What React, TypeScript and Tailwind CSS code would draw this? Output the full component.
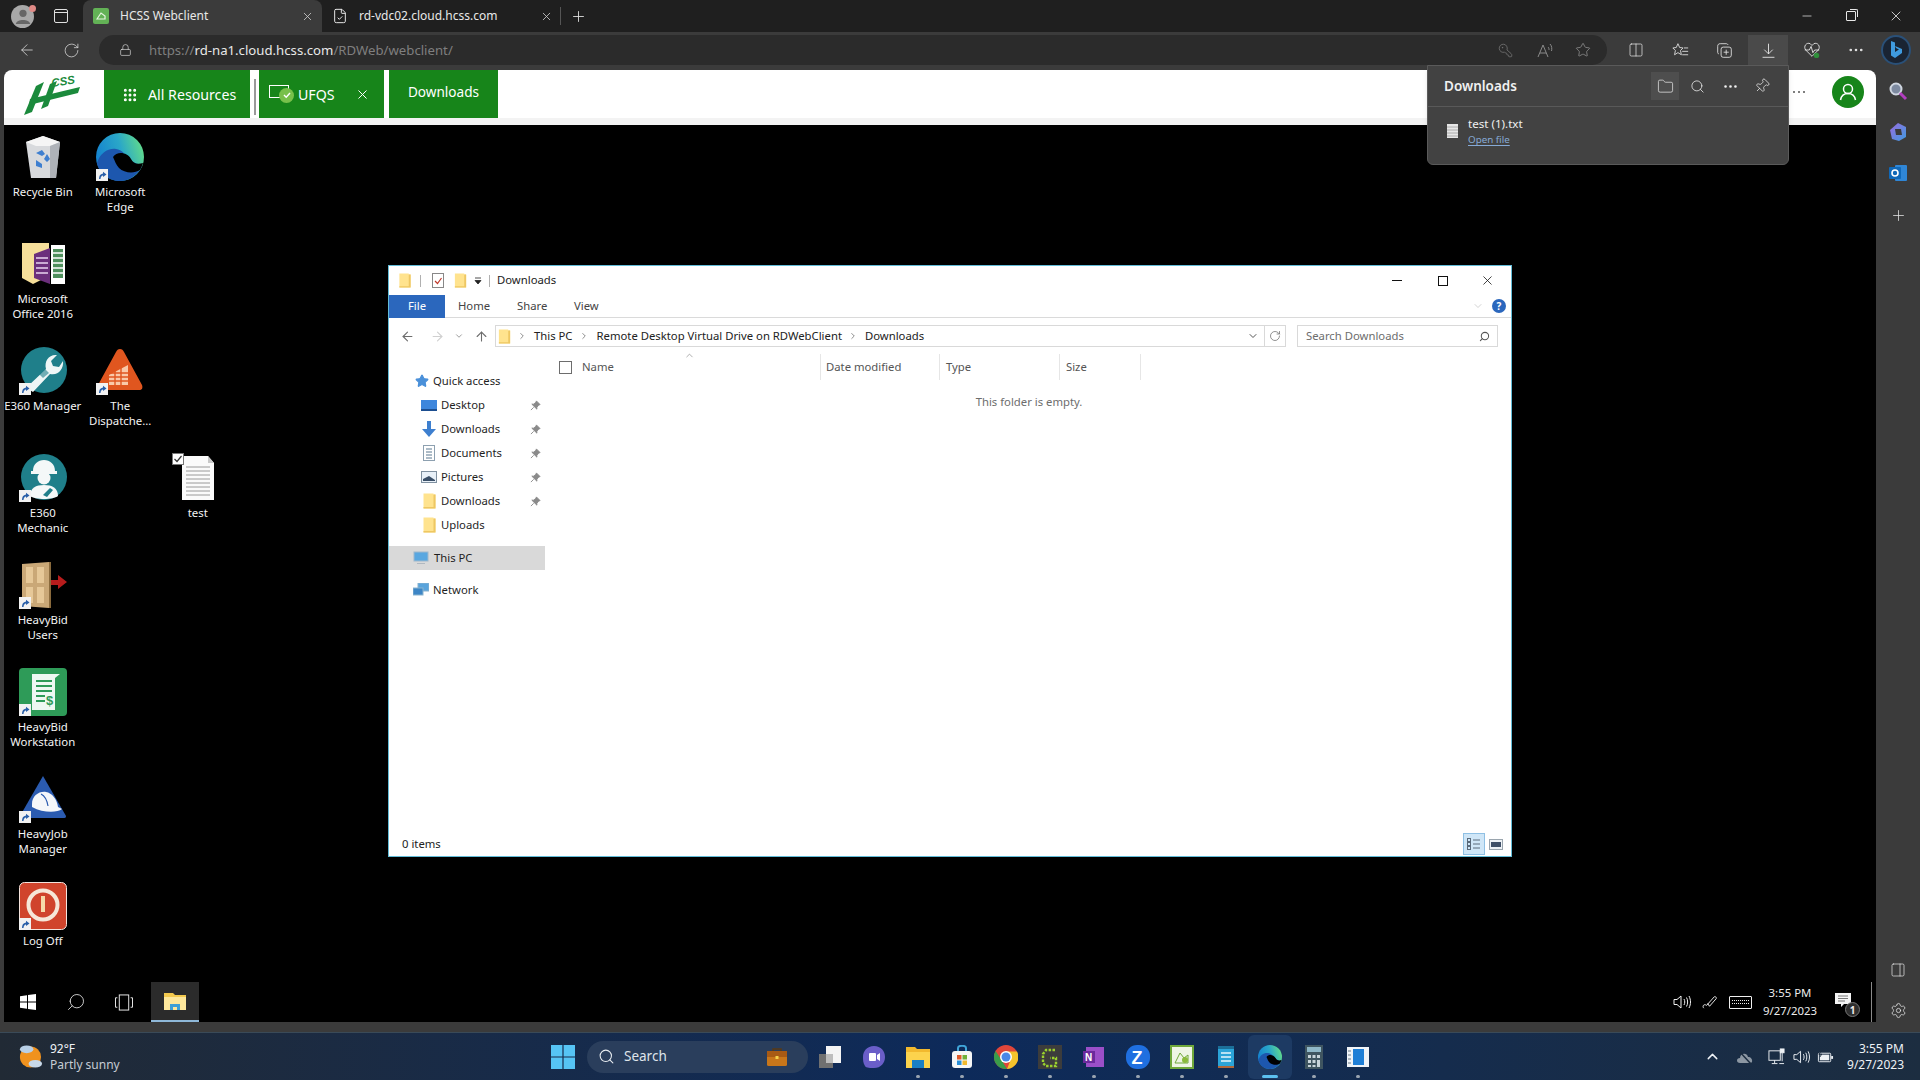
import { ReactNode } from "react";
import {
  ArrowLeft,
  ArrowRight,
  ArrowUp,
  ChevronDown,
  ChevronRight,
  ChevronUp,
  Columns2,
  Ellipsis,
  FileCheck,
  Folder,
  Grip,
  KeyRound,
  Lock,
  Minus,
  PanelRight,
  Pin,
  Plus,
  RotateCw,
  Search,
  Settings,
  Star,
  X,
} from "lucide-react";

// ---------- shared little drawings ----------

const Shortcut = () => (
  <svg viewBox="0 0 12 12" className="absolute bottom-0 left-0 h-3 w-3">
    <rect width="12" height="12" fill="#f2f2f2" />
    <path d="M3 10 C3 7 4 5 7 4.5 V2.8 L10.5 5.6 L7 8 V6.4 C5.5 6.6 4.5 8 4.5 10 Z" fill="#2a5fa8" />
  </svg>
);

const EdgeLogo = ({ className }: { className: string }) => (
  <svg viewBox="0 0 48 48" className={className}>
    <defs>
      <linearGradient id="edgeTop" x1="0" y1="0.6" x2="1" y2="0.3">
        <stop offset="0" stopColor="#1380d0" />
        <stop offset="0.55" stopColor="#2aa7c8" />
        <stop offset="1" stopColor="#62dc8a" />
      </linearGradient>
    </defs>
    <circle cx="24" cy="24" r="24" fill="url(#edgeTop)" />
    <path d="M1 30 C4 20 12 15 20 16 C26 17 30 21 30 26 L46 33 C42 42 33 48 24 48 C12 48 3 40 1 30 Z" fill="#1d57ae" />
    <path d="M17 24 C21 18 31 19 35 26 C37 30 41 32 47 30 C46 33 45 35 44 37 C38 41 28 40 23 35 C20 32 19 28 17 24 Z" fill="#000" />
    <path d="M30 24 C33 24 36 27 36 30 C32 30 29 28 30 24 Z" fill="#000" />
  </svg>
);

const MiniFolder = ({ className = "h-4 w-3" }: { className?: string }) => (
  <svg viewBox="0 0 12 16" className={className}>
    <path d="M0 0.5 H10 V1.5 H12 V15.5 H0 Z" fill="#ffe38e" />
    <path d="M10 1.5 H12 V15.5 H0 V14 H10 Z" fill="#eec763" />
  </svg>
);

const ExplorerIcon = ({ className }: { className: string }) => (
  <svg viewBox="0 0 24 24" className={className}>
    <path d="M1 4 H10 L12 6 H23 V21 H1 Z" fill="#f3c94e" />
    <path d="M1 8 H23 V21 H1 Z" fill="#fde79b" />
    <path d="M7 21 V15 H17 V21 H14 V18 H10 V21 Z" fill="#3d9fd6" />
  </svg>
);

// ---------- desktop icons ----------

const RecycleBin = () => (
  <svg viewBox="0 0 48 48" className="h-12 w-12">
    <path d="M7 9 L24 3 L41 9 L37 45 H12 Z" fill="#d8dadd" />
    <path d="M7 9 L24 3 L41 9 L31 13 H17 Z" fill="#f5f5f5" />
    <path d="M31 13 L41 9 L37 45 H31 Z" fill="#aeb2b8" />
    <path d="M17 20 l6 -3 3 4 -3 2 Z M28 21 l3 5 -3 3 -3 -3 Z M17 27 l6 4 v4 l-6 -2 Z" fill="#3e7fd0" />
  </svg>
);

const OfficeFolder = () => (
  <svg viewBox="0 0 48 48" className="h-12 w-12">
    <path d="M3 3 H30 V36 L14 44 L3 38 Z" fill="#f6df9a" />
    <path d="M32 5 H46 V44 H32 Z" fill="#fff" />
    <path d="M34 9 H44 V38 H34 Z" fill="#4e8f5c" />
    <path d="M34 13 H44 M34 18 H44 M34 23 H44 M34 28 H44 M34 33 H44" stroke="#fff" strokeWidth="1.6" />
    <path d="M15 14 L31 8 V44 L15 38 Z" fill="#6b2f7c" />
    <path d="M17 18 H29 M17 23 H29 M17 28 H29 M17 33 H29" stroke="#e9d5f0" strokeWidth="1.6" />
  </svg>
);

const E360Manager = () => (
  <svg viewBox="0 0 48 48" className="h-12 w-12">
    <circle cx="25" cy="23" r="23" fill="#1f7f8a" />
    <path d="M8 40 L27 22 C25 14 30 7 38 8 L32 14 L34 19 L40 20 L44 14 C45 22 39 29 31 27 L14 45 C12 44 9 42 8 40 Z" fill="#eef6f6" />
    <path d="M20 27 l6 -5 4 4 -6 5 Z" fill="#1f7f8a" opacity="0.6" />
  </svg>
);

const Dispatcher = () => (
  <svg viewBox="0 0 48 48" className="h-12 w-12">
    <path d="M24 2 C26 2 27 3 28 5 L46 38 C47 41 46 43 43 43 H5 C2 43 1 41 2 38 L20 5 C21 3 22 2 24 2 Z" fill="#e0561f" />
    <path d="M13 28 L32 18 V38 H13 Z" fill="#f9c9a8" />
    <path d="M19 24 V38 M25 21 V38 M13 30 H32 M13 34 H32 M13 26 H32" stroke="#e0561f" strokeWidth="1.4" />
  </svg>
);

const E360Mechanic = () => (
  <svg viewBox="0 0 48 48" className="h-12 w-12">
    <circle cx="25" cy="23" r="23" fill="#1f7f8a" />
    <path d="M14 17 C14 10 19 6 25 6 C31 6 36 10 36 17 H38 V20 H12 V17 Z" fill="#f4f8f8" />
    <circle cx="25" cy="24" r="6.5" fill="#f4f8f8" />
    <path d="M11 42 C11 34 17 31 25 31 C33 31 39 34 39 42 C34 46 16 46 11 42 Z" fill="#f4f8f8" />
    <path d="M24 41 L31 34 L34 36 L28 43 Z" fill="#1f7f8a" />
  </svg>
);

const HeavyBidUsers = () => (
  <svg viewBox="0 0 48 48" className="h-12 w-12">
    <path d="M3 3 L30 1 V47 L3 45 Z" fill="#caa877" />
    <path d="M7 6 H14 V22 H7 Z M18 6 H25 V22 H18 Z M7 26 H14 V42 H7 Z M18 26 H25 V42 H18 Z" fill="#e6c898" />
    <path d="M30 1 H32 V47 H30 Z" fill="#8a6a3c" />
    <path d="M32 19 H39 V14 L48 21 L39 28 V24 H32 Z" fill="#b71c1c" />
  </svg>
);

const HeavyBidWorkstation = () => (
  <svg viewBox="0 0 48 48" className="h-12 w-12">
    <rect width="48" height="48" rx="4" fill="#2e9b58" />
    <path d="M13 6 H41 L36 10 V42 H13 Z" fill="#eef8f2" />
    <path d="M17 13 H33 M17 18 H33 M17 23 H33 M17 28 H26 M17 33 H26" stroke="#2e9b58" strokeWidth="1.8" />
    <text x="27" y="37" fontSize="13" fontWeight="700" fill="#2e9b58" fontFamily="Liberation Sans, sans-serif">$</text>
  </svg>
);

const HeavyJob = () => (
  <svg viewBox="0 0 48 48" className="h-12 w-12">
    <path d="M24 1 L47 41 C47 43 46 43 44 43 H4 C2 43 1 43 1 41 Z" fill="#2b5bb0" />
    <path d="M13 29 C13 21 20 16 27 17 C33 18 38 24 39 32 L43 34 C38 38 24 38 13 32 Z" fill="#f5f7fa" />
    <path d="M22 19 C26 21 28 25 29 31" stroke="#2b5bb0" strokeWidth="1.2" fill="none" />
  </svg>
);

const LogOff = () => (
  <svg viewBox="0 0 48 48" className="h-12 w-12">
    <rect x="0.5" y="0.5" width="47" height="47" rx="5" fill="#d0442c" stroke="#f3e3dd" />
    <circle cx="24" cy="23" r="14.5" fill="none" stroke="#f6e7d8" strokeWidth="4" />
    <rect x="22" y="14" width="4" height="16" fill="#f6d9a8" />
  </svg>
);

const TextFile = () => (
  <div className="relative h-12 w-12">
    <svg viewBox="0 0 48 48" className="h-12 w-12">
      <path d="M8 2 H34 L40 9 V46 H8 Z" fill="#fafafa" />
      <path d="M34 2 L40 9 H34 Z" fill="#c8c8c8" />
      <path d="M12 13 H36 M12 17 H36 M12 21 H36 M12 25 H36 M12 29 H36 M12 33 H36 M12 37 H36 M12 41 H36" stroke="#8e8e8e" strokeWidth="0.9" />
    </svg>
    <div className="absolute -left-[2px] top-[-1px] flex h-3 w-3 items-center justify-center border border-[#777] bg-white">
      <svg viewBox="0 0 10 10" className="h-[10px] w-[10px]">
        <path d="M1.5 5 L4 7.5 L8.5 2" fill="none" stroke="#333" strokeWidth="1.2" />
      </svg>
    </div>
  </div>
);

const desktopIcons: { label: string[]; place: string; art: ReactNode; shortcut?: boolean }[] = [
  { label: ["Recycle Bin"], place: "col-start-1 row-start-1", art: <RecycleBin /> },
  { label: ["Microsoft", "Edge"], place: "col-start-2 row-start-1", art: <EdgeLogo className="h-12 w-12" />, shortcut: true },
  { label: ["Microsoft", "Office 2016"], place: "col-start-1 row-start-2", art: <OfficeFolder /> },
  { label: ["E360 Manager"], place: "col-start-1 row-start-3", art: <E360Manager />, shortcut: true },
  { label: ["The", "Dispatche..."], place: "col-start-2 row-start-3", art: <Dispatcher />, shortcut: true },
  { label: ["E360", "Mechanic"], place: "col-start-1 row-start-4", art: <E360Mechanic />, shortcut: true },
  { label: ["test"], place: "col-start-3 row-start-4", art: <TextFile /> },
  { label: ["HeavyBid", "Users"], place: "col-start-1 row-start-5", art: <HeavyBidUsers />, shortcut: true },
  { label: ["HeavyBid", "Workstation"], place: "col-start-1 row-start-6", art: <HeavyBidWorkstation />, shortcut: true },
  { label: ["HeavyJob", "Manager"], place: "col-start-1 row-start-7", art: <HeavyJob />, shortcut: true },
  { label: ["Log Off"], place: "col-start-1 row-start-8", art: <LogOff />, shortcut: true },
];

// ---------- browser chrome ----------

const TabBar = () => (
  <div className="flex h-8 items-center bg-[#1f1f1f] text-[12px] text-[#e8e8e8]">
    <div className="relative ml-[11px] flex h-[23px] w-[23px] items-center justify-center rounded-full bg-[#a8a8a8]">
      <svg viewBox="0 0 20 20" className="h-[18px] w-[18px]">
        <circle cx="10" cy="7" r="4" fill="#666" />
        <path d="M2 19 C3 13 17 13 18 19 Z" fill="#666" />
      </svg>
      <div className="absolute -right-[2px] top-0 h-[7px] w-[7px] rounded-full bg-[#e08a86]" />
    </div>
    <div className="ml-[20px] flex h-[14px] w-[14px] flex-col rounded-[2px] border border-[#e0e0e0]">
      <div className="h-[3px] border-b border-[#e0e0e0]" />
    </div>
    <div className="ml-[15px] flex h-8 w-[239px] items-center rounded-t-lg bg-[#3b3b3b] pl-[10px]">
      <div className="flex h-4 w-4 items-center justify-center rounded-[2px] bg-[#63b256]">
        <svg viewBox="0 0 12 12" className="h-3 w-3">
          <path d="M2 9 L6 3 L10 6 L10 9 Z" fill="none" stroke="#e6f5e0" strokeWidth="1.2" />
        </svg>
      </div>
      <span className="ml-[11px] w-[181px]">HCSS Webclient</span>
      <X className="h-[13px] w-[13px] text-[#cfcfcf]" strokeWidth={1.5} />
    </div>
    <div className="flex h-8 w-[238px] items-center pl-[10px]">
      <FileCheck className="h-4 w-4 text-[#e6e6e6]" strokeWidth={1.5} />
      <span className="ml-[11px] w-[181px]">rd-vdc02.cloud.hcss.com</span>
      <X className="h-[13px] w-[13px] text-[#cfcfcf]" strokeWidth={1.5} />
    </div>
    <div className="h-[18px] w-px bg-[#555]" />
    <Plus className="ml-[9px] h-[17px] w-[17px] text-[#e0e0e0]" strokeWidth={1.25} />
    <div className="flex-1" />
    <Minus className="h-[14px] w-[14px]" strokeWidth={1.25} />
    <div className="ml-[32px]">
      <div className="relative h-[10px] w-[10px] rounded-[1px] border border-[#e8e8e8]">
        <div className="absolute -right-[3px] -top-[3px] h-[8px] w-[8px] rounded-tr-[2px] border-r border-t border-[#e8e8e8]" />
      </div>
    </div>
    <X className="ml-[32px] mr-[16px] h-[16px] w-[16px]" strokeWidth={1.25} />
  </div>
);

const ToolIcon = ({ children, className = "" }: { children: ReactNode; className?: string }) => (
  <div className={`flex h-[30px] w-[40px] shrink-0 items-center justify-center ${className}`}>{children}</div>
);

const Toolbar = () => (
  <div className="flex h-9 items-center bg-[#3b3b3b] text-[#e6e6e6]">
    <ArrowLeft className="ml-[18px] h-[18px] w-[18px]" strokeWidth={1} />
    <RotateCw className="ml-[27px] h-[17px] w-[17px]" strokeWidth={1} />
    <div className="ml-[19px] flex h-[30px] w-[1508px] items-center rounded-full bg-[#2b2b2b] pl-[20px] pr-[6px]">
      <Lock className="h-[14px] w-[13px] text-[#d8d8d8]" strokeWidth={1.25} />
      <span className="ml-[17px] flex-1 pt-[1px] text-[13.2px] text-[#7f7f7f]">
        https://<span className="text-[#e8e8e8]">rd-na1.cloud.hcss.com</span>/RDWeb/webclient/
      </span>
      <KeyRound className="mr-[24px] h-[15px] w-[15px] -scale-x-100 text-[#777]" strokeWidth={1.25} />
      <svg viewBox="0 0 18 16" className="mr-[20px] h-[16px] w-[18px]" fill="none" stroke="#8a8a8a">
        <path d="M1 15 L6 3 L11 15 M3 11 H9" />
        <path d="M11 5 C12 6 12 7 12 8 M13 2 C15 4 15 7 14.5 9" />
      </svg>
      <Star className="mr-[10px] h-[16px] w-[16px] text-[#8a8a8a]" strokeWidth={1.25} />
    </div>
    <ToolIcon className="ml-[9px]">
      <Columns2 className="h-[16px] w-[16px]" strokeWidth={1.1} />
    </ToolIcon>
    <ToolIcon className="ml-[4px]">
      <svg viewBox="0 0 20 20" className="h-[17px] w-[17px]" fill="none" stroke="#e6e6e6">
        <path d="M7 2 L9 6.5 L13 7 L10 10 L11 15 L7 12.5 L3 15 L4 10 L1 7 L5 6.5 Z" />
        <path d="M14 7 H19 M12 11 H19 M12 15 H19" />
      </svg>
    </ToolIcon>
    <ToolIcon className="ml-[4px]">
      <svg viewBox="0 0 20 20" className="h-[17px] w-[17px]" fill="none" stroke="#e6e6e6">
        <rect x="6" y="6" width="12" height="12" rx="2.5" />
        <path d="M12 9 V15 M9 12 H15 M14 3.5 C14 2.5 13 2 12 2 H5 C3 2 2 3 2 5 V12 C2 13 2.5 14 3.5 14" />
      </svg>
    </ToolIcon>
    <ToolIcon className="ml-[4px] bg-[#4a4a4a]">
      <svg viewBox="0 0 20 20" className="h-[17px] w-[17px]" fill="none" stroke="#f0f0f0">
        <path d="M10 2 V14 M5 9 L10 14 L15 9 M3 18 H17" />
      </svg>
    </ToolIcon>
    <ToolIcon className="ml-[4px]">
      <svg viewBox="0 0 20 20" className="h-[18px] w-[18px]" fill="none">
        <path d="M10 17 L3 10 C0 6 4 1 8 3 L10 5 L12 3 C16 1 20 6 17 10 Z" stroke="#e6e6e6" />
        <path d="M2 10 H7 L9 6 L11 13 L13 10 H18" stroke="#e6e6e6" />
        <circle cx="15" cy="16" r="3" fill="#2f8f3a" />
      </svg>
    </ToolIcon>
    <ToolIcon className="ml-[4px]">
      <Ellipsis className="h-[18px] w-[18px]" strokeWidth={1.5} />
    </ToolIcon>
    <div className="ml-[5px] flex h-[30px] w-[30px] items-center justify-center rounded-full border-2 border-[#2a5078] bg-[#1a2433]">
      <svg viewBox="0 0 16 20" className="h-[20px] w-[16px]">
        <path d="M3 1 L7 2.5 V12 L11 9.5 L8 8 L7 6 L14 9 V13 L7 18 L3 15.5 Z" fill="#3f9be0" />
      </svg>
    </div>
  </div>
);

const SideRail = () => (
  <div className="flex w-[44px] shrink-0 flex-col items-center justify-between bg-[#3b3b3b] pb-[2px] pt-[2px]">
    <div className="flex flex-col items-center">
      <div className="flex h-[41px] items-center justify-center">
        <svg viewBox="0 0 20 20" className="h-5 w-5" fill="none">
          <circle cx="8" cy="8" r="5.5" fill="#7d8aa0" stroke="#cfd6e0" strokeWidth="2" />
          <path d="M12 12 L18 18" stroke="#b23ec0" strokeWidth="3" />
        </svg>
      </div>
      <div className="flex h-[41px] items-center justify-center">
        <svg viewBox="0 0 20 20" className="h-5 w-5" fill="none">
          <path d="M10 1 L18 5 V15 L11 19 L4 17 L2 8 Z" fill="url(#copilot)" />
          <defs>
            <linearGradient id="copilot" x1="0" y1="0" x2="1" y2="1">
              <stop offset="0" stopColor="#9a6be0" />
              <stop offset="1" stopColor="#3f9be0" />
            </linearGradient>
          </defs>
          <path d="M7 7 H13 L14 13 H8 Z" fill="#3b3b3b" />
        </svg>
      </div>
      <div className="flex h-[41px] items-center justify-center">
        <svg viewBox="0 0 20 20" className="h-5 w-5">
          <rect x="7" y="2" width="12" height="16" rx="1" fill="#2f86d6" />
          <rect x="1" y="4" width="12" height="12" rx="1" fill="#1068b8" />
          <circle cx="7" cy="10" r="3" fill="none" stroke="#fff" strokeWidth="1.6" />
        </svg>
      </div>
      <div className="flex h-[45px] items-center justify-center">
        <Plus className="h-[17px] w-[17px] text-[#e4e4e4]" strokeWidth={1.1} />
      </div>
    </div>
    <div className="flex flex-col items-center">
      <div className="flex h-10 items-center justify-center">
        <PanelRight className="h-[16px] w-[16px] text-[#e4e4e4]" strokeWidth={1.1} />
      </div>
      <div className="flex h-10 items-center justify-center">
        <Settings className="h-[17px] w-[17px] text-[#e4e4e4]" strokeWidth={1.1} />
      </div>
    </div>
  </div>
);

const DownloadsFlyout = () => (
  <div className="absolute left-[1427px] top-[65px] z-20 h-[100px] w-[362px] rounded-b-md border border-[#5a5a5a] bg-[#424242] text-[#f0f0f0] shadow-md">
    <div className="flex h-[41px] items-center border-b border-[#595959] pl-[16px]">
      <span className="flex-1 text-[13.5px] font-semibold">Downloads</span>
      <div className="flex h-[28px] w-[28px] items-center justify-center bg-[#4e4e4e]">
        <Folder className="h-[17px] w-[17px]" strokeWidth={1} />
      </div>
      <Search className="ml-[11px] h-[15px] w-[15px]" strokeWidth={1.25} />
      <Ellipsis className="ml-[17px] h-[17px] w-[17px]" strokeWidth={1.75} />
      <Pin className="ml-[15px] mr-[18px] h-[16px] w-[16px] rotate-45" strokeWidth={1.1} />
    </div>
    <div className="flex items-start pl-[19px] pt-[9px]">
      <svg viewBox="0 0 11 14" className="mt-[8px] h-[14px] w-[11px]">
        <rect width="11" height="14" fill="#e6e6e6" />
        <path d="M0 3 H11 M0 6 H11 M0 9 H11 M0 12 H11" stroke="#9d9d9d" strokeWidth="0.8" />
      </svg>
      <div className="ml-[10px] flex flex-col">
        <span className="text-[11.6px] leading-[16px]">test (1).txt</span>
        <span className="text-[9.8px] leading-[15px] text-[#86aad6] underline underline-offset-2">Open file</span>
      </div>
    </div>
  </div>
);

const HcssHeader = () => (
  <div className="flex h-[55px] shrink-0 rounded-t-lg border-b-[7px] border-[#f3f3f3] bg-white">
    <div className="flex h-[48px] w-[100px] shrink-0 items-center justify-center pr-[5px]">
      <svg viewBox="0 0 57 42" className="h-[42px] w-[57px]">
        <path d="M1 42 L9 39 L21 9 L13 13 Z" fill="#1b8a3c" />
        <path d="M18 36 L25 33 L34 8 L27 11 Z" fill="#1b8a3c" />
        <path d="M7 26 L57 14 L55 20 L6 32 Z" fill="#1b8a3c" />
        <text x="29" y="14" transform="rotate(-9 29 14)" fontSize="11.5" fontStyle="italic" fontWeight="700" fill="#1b8a3c" fontFamily="Liberation Sans, sans-serif">
          CSS
        </text>
      </svg>
    </div>
    <div className="flex h-[48px] w-[146px] shrink-0 items-center bg-[#17851a] pl-[18px] pt-[2px] text-white">
      <Grip className="h-[16px] w-[16px]" strokeWidth={2.5} />
      <span className="ml-[10px] text-[14.2px]">All Resources</span>
    </div>
    <div className="flex h-[48px] w-[9px] shrink-0 items-end justify-center pb-[3px]">
      <div className="h-[36px] w-[2px] bg-[#9a9a9a]" />
    </div>
    <div className="flex h-[48px] w-[125px] shrink-0 items-center bg-[#17851a] pl-[10px] pt-[1px] text-white">
      <div className="relative h-[20px] w-[28px]">
        <div className="absolute left-0 top-0 h-[13px] w-[20px] border border-white" />
        <div className="absolute left-[10px] top-[3px] flex h-[15px] w-[15px] items-center justify-center rounded-full bg-[#78c04b]">
          <svg viewBox="0 0 10 10" className="h-[10px] w-[10px]">
            <path d="M2 5 L4.2 7.2 L8 3" fill="none" stroke="#fff" strokeWidth="1.4" />
          </svg>
        </div>
      </div>
      <span className="ml-[1px] w-[57px] text-[14.2px]">UFQS</span>
      <X className="h-[15px] w-[15px]" strokeWidth={1.6} />
    </div>
    <div className="ml-[5px] flex h-[48px] w-[109px] shrink-0 items-start justify-center bg-[#17851a] pt-[12px] text-[13.6px] text-white">
      Downloads
    </div>
    <div className="flex flex-1 items-start justify-end">
      <div className="mr-[27px] mt-[21px] flex gap-[3px]">
        <div className="h-[2px] w-[2px] rounded-full bg-[#555]" />
        <div className="h-[2px] w-[2px] rounded-full bg-[#555]" />
        <div className="h-[2px] w-[2px] rounded-full bg-[#555]" />
      </div>
      <div className="mr-[12px] mt-[6px] flex h-8 w-8 items-center justify-center rounded-full bg-[#17851a]">
        <svg viewBox="0 0 20 20" className="h-5 w-5" fill="none" stroke="#fff" strokeWidth="1.5">
          <circle cx="10" cy="7" r="4.5" />
          <path d="M2.5 18 C3.5 12.5 7 11.5 10 11.5 C13 11.5 16.5 12.5 17.5 18" />
        </svg>
      </div>
    </div>
  </div>
);

// ---------- remote desktop ----------

const NavRow = ({ icon, label, pinned }: { icon: ReactNode; label: string; pinned?: boolean }) => (
  <div className="flex h-6 items-center pl-[32px] text-[#1f1f1f]">
    <div className="flex w-[16px] justify-center">{icon}</div>
    <span className="ml-[4px] flex-1">{label}</span>
    {pinned && (
      <svg viewBox="0 0 12 12" className="mr-[4px] h-[11px] w-[11px]">
        <path d="M7 1 L11 5 L9.5 5.5 L7.5 8 L7.5 10 L2 4.5 L4 4.5 L6.5 2.5 Z M4 8 L1 11" fill="#8a8a8a" stroke="#8a8a8a" />
      </svg>
    )}
  </div>
);

const PcIcon = () => (
  <svg viewBox="0 0 16 14" className="h-[14px] w-[16px]">
    <rect x="1" y="1" width="14" height="9" fill="#59a7e0" stroke="#9fb8cc" />
    <path d="M4 12 H12 V13 H4 Z" fill="#b0b8c0" />
  </svg>
);

const Explorer = () => (
  <div className="absolute left-[384px] top-[140px] flex h-[592px] w-[1124px] flex-col border border-[#62bcd8] bg-white text-[11.3px] text-[#222]">
    {/* title bar */}
    <div className="flex h-[29px] shrink-0 items-center pl-[10px]">
      <MiniFolder className="h-[15px] w-[12px]" />
      <div className="ml-[9px] h-[12px] w-px bg-[#b0b0b0]" />
      <svg viewBox="0 0 12 15" className="ml-[11px] h-[15px] w-[12px]">
        <rect x="0.5" y="0.5" width="11" height="14" fill="#fff" stroke="#888" />
        <path d="M3 8 L5.5 10.5 L9.5 5" fill="none" stroke="#c0392b" strokeWidth="1.2" />
      </svg>
      <MiniFolder className="ml-[10px] h-[15px] w-[13px]" />
      <svg viewBox="0 0 8 8" className="ml-[7px] h-[8px] w-[8px]">
        <path d="M1 1 H7 M1 3.5 H7 L4 7 Z" stroke="#222" fill="#222" strokeWidth="0.8" />
      </svg>
      <div className="ml-[7px] h-[12px] w-px bg-[#b0b0b0]" />
      <span className="ml-[7px] flex-1">Downloads</span>
      <div className="h-px w-[10px] bg-[#111]" />
      <div className="ml-[36px] h-[10px] w-[10px] border border-[#111]" />
      <X className="ml-[32px] mr-[16px] h-[15px] w-[15px] text-[#111]" strokeWidth={1.25} />
    </div>
    {/* ribbon tabs */}
    <div className="flex h-[23px] shrink-0 items-center border-b border-[#dadada]">
      <div className="flex h-[23px] w-[56px] items-center justify-center bg-[#2b67bd] pt-[1px] text-white">File</div>
      <span className="ml-[13px] w-[59px] pt-[1px] text-[#444]">Home</span>
      <span className="w-[57px] pt-[1px] text-[#444]">Share</span>
      <span className="flex-1 pt-[1px] text-[#444]">View</span>
      <ChevronDown className="mr-[8px] h-[12px] w-[12px] text-[#b8b8b8]" strokeWidth={1.25} />
      <div className="mr-[5px] flex h-[14px] w-[14px] items-center justify-center rounded-full bg-[#2b67bd] text-[10px] font-bold text-white">?</div>
    </div>
    {/* address row */}
    <div className="mt-[7px] flex h-[22px] shrink-0 items-center pl-[11px]">
      <ArrowLeft className="h-[15px] w-[15px] text-[#6d6d6d]" strokeWidth={1.75} />
      <ArrowRight className="ml-[15px] h-[15px] w-[15px] text-[#d0d0d0]" strokeWidth={1.75} />
      <ChevronDown className="ml-[9px] h-[10px] w-[10px] text-[#8a8a8a]" strokeWidth={2} />
      <ArrowUp className="ml-[10px] h-[15px] w-[15px] text-[#6d6d6d]" strokeWidth={1.75} />
      <div className="ml-[6px] flex h-[22px] w-[791px] items-center border border-[#d9d9d9] pl-[2px]">
        <MiniFolder className="h-[15px] w-[13px]" />
        <ChevronRight className="ml-[6px] h-[10px] w-[10px] text-[#777]" strokeWidth={2} />
        <span className="ml-[7px]">This PC</span>
        <ChevronRight className="ml-[6px] h-[10px] w-[10px] text-[#777]" strokeWidth={2} />
        <span className="ml-[8px]">Remote Desktop Virtual Drive on RDWebClient</span>
        <ChevronRight className="ml-[6px] h-[10px] w-[10px] text-[#777]" strokeWidth={2} />
        <span className="ml-[7px] flex-1">Downloads</span>
        <ChevronDown className="mr-[5px] h-[12px] w-[12px] text-[#555]" strokeWidth={2} />
        <div className="flex h-[20px] w-[21px] items-center justify-center border-l border-[#d9d9d9]">
          <RotateCw className="h-[12px] w-[12px] text-[#6d6d6d]" strokeWidth={1.5} />
        </div>
      </div>
      <div className="ml-[11px] flex h-[22px] w-[201px] items-center justify-between border border-[#d9d9d9] pl-[8px] pr-[7px] text-[#6d6d6d]">
        <span>Search Downloads</span>
        <Search className="h-[11px] w-[11px] -scale-x-100 text-[#555]" strokeWidth={2.25} />
      </div>
    </div>
    {/* body */}
    <div className="flex min-h-0 flex-1">
      <div className="w-[156px] shrink-0 pt-[22px]">
        <div className="flex h-6 items-center pl-[26px] text-[#1f1f1f]">
          <Star className="h-[14px] w-[14px] fill-[#4a90d9] text-[#4a90d9]" />
          <span className="ml-[4px]">Quick access</span>
        </div>
        <NavRow
          label="Desktop"
          pinned
          icon={<div className="h-[11px] w-[16px] border-b-2 border-[#1c4e90] bg-[#3d86dc]" />}
        />
        <NavRow
          label="Downloads"
          pinned
          icon={
            <svg viewBox="0 0 16 16" className="h-4 w-4">
              <path d="M6 0 H10 V8 H15 L8 16 L1 8 H6 Z" fill="#3d7fcf" />
            </svg>
          }
        />
        <NavRow
          label="Documents"
          pinned
          icon={
            <svg viewBox="0 0 12 16" className="h-4 w-3">
              <rect x="0.5" y="0.5" width="11" height="15" fill="#fff" stroke="#8da0b0" />
              <path d="M3 4 H9 M3 7 H9 M3 10 H9 M3 13 H9" stroke="#5a7890" />
            </svg>
          }
        />
        <NavRow
          label="Pictures"
          pinned
          icon={
            <svg viewBox="0 0 16 12" className="h-3 w-4">
              <rect x="0.5" y="0.5" width="15" height="11" fill="#e8f0f8" stroke="#7f90a0" />
              <path d="M2 8 L8 5 L14 9 V10 H2 Z" fill="#3a4f68" />
            </svg>
          }
        />
        <NavRow label="Downloads" pinned icon={<MiniFolder className="h-[16px] w-[13px]" />} />
        <NavRow label="Uploads" icon={<MiniFolder className="h-[16px] w-[13px]" />} />
        <div className="mt-[9px] flex h-6 items-center bg-[#d9d9d9] pl-[24px] text-[#1f1f1f]">
          <PcIcon />
          <span className="ml-[5px]">This PC</span>
        </div>
        <div className="mt-[8px] flex h-6 items-center pl-[24px] text-[#1f1f1f]">
          <svg viewBox="0 0 16 14" className="h-[14px] w-[16px]">
            <rect x="5" y="0" width="11" height="8" fill="#5aa4dc" stroke="#8ab4d0" />
            <rect x="0" y="5" width="10" height="7" fill="#3d86c6" stroke="#8ab4d0" />
          </svg>
          <span className="ml-[4px]">Network</span>
        </div>
      </div>
      <div className="relative flex-1">
        <div className="mt-[7px] flex h-[26px] items-center text-[#555]">
          <div className="ml-[14px] h-[13px] w-[13px] border border-[#6d6d6d]" />
          <span className="ml-[10px] w-[238px]">Name</span>
          <div className="h-[26px] w-px bg-[#e6e6e6]" />
          <span className="w-[118px] pl-[5px]">Date modified</span>
          <div className="h-[26px] w-px bg-[#e6e6e6]" />
          <span className="w-[119px] pl-[6px]">Type</span>
          <div className="h-[26px] w-px bg-[#e6e6e6]" />
          <span className="w-[80px] pl-[6px]">Size</span>
          <div className="h-[26px] w-px bg-[#e6e6e6]" />
        </div>
        <ChevronUp className="absolute left-[139px] top-[3px] h-[11px] w-[11px] text-[#8a8a8a]" strokeWidth={1.5} />
        <div className="mt-[14px] pl-[2px] text-center text-[#6d6d6d]">This folder is empty.</div>
      </div>
    </div>
    {/* status bar */}
    <div className="flex h-[24px] shrink-0 items-center pl-[13px]">
      <span className="flex-1">0 items</span>
      <div className="flex h-[22px] w-[22px] items-center justify-center border border-[#8fc0e4] bg-[#cfe6f7]">
        <svg viewBox="0 0 14 12" className="h-[12px] w-[14px]" fill="none" stroke="#5a6a7a">
          <rect x="0.5" y="0.5" width="3" height="3" />
          <rect x="0.5" y="4.5" width="3" height="3" />
          <rect x="0.5" y="8.5" width="3" height="3" />
          <path d="M6 2 H13 M6 6 H13 M6 10 H13" />
        </svg>
      </div>
      <div className="mr-[5px] flex h-[22px] w-[21px] items-center justify-center">
        <svg viewBox="0 0 14 11" className="h-[11px] w-[14px]">
          <rect x="0.5" y="0.5" width="13" height="10" fill="#eef2f6" stroke="#9aa5ae" />
          <rect x="2" y="3" width="10" height="5" fill="#3f5068" />
        </svg>
      </div>
    </div>
  </div>
);

const Desktop = () => (
  <div className="relative min-h-0 flex-1 overflow-hidden bg-black">
    <div className="grid grid-cols-[77.5px_77.5px_77.5px] auto-rows-[107px] pt-[8px]">
      {desktopIcons.map((icon) => (
        <div key={icon.label.join(" ")} className={`flex flex-col items-center ${icon.place}`}>
          <div className="relative h-12 w-12">
            {icon.art}
            {icon.shortcut && <Shortcut />}
          </div>
          <div className="mt-[3px] text-center text-[11.4px] leading-[15px] whitespace-nowrap text-[#f4f4f4]">
            {icon.label.map((line) => (
              <div key={line}>{line}</div>
            ))}
          </div>
        </div>
      ))}
    </div>
    <Explorer />
  </div>
);

const RemoteTaskbar = () => (
  <div className="flex h-10 shrink-0 items-center bg-black text-[#ececec]">
    <div className="flex h-10 w-12 items-center justify-center">
      <svg viewBox="0 0 16 16" className="h-4 w-4">
        <path d="M0 2.2 L7 1.2 V7.4 H0 Z M8 1 L16 0 V7.4 H8 Z M0 8.6 H7 V14.8 L0 13.8 Z M8 8.6 H16 V16 L8 15 Z" fill="#fff" />
      </svg>
    </div>
    <div className="flex h-10 w-12 items-center justify-center">
      <Search className="h-[20px] w-[20px] -scale-x-100" strokeWidth={1} />
    </div>
    <div className="flex h-10 w-12 items-center justify-center">
      <svg viewBox="0 0 20 18" className="h-[17px] w-[20px]" fill="none" stroke="#f0f0f0">
        <rect x="5" y="1" width="10" height="16" />
        <path d="M3 4 H1 V14 H3 M17 4 H19 V14 H17" />
      </svg>
    </div>
    <div className="ml-[3px] flex h-10 w-12 items-center justify-center border-b-[2px] border-[#8fb8d8] bg-[#2b2b2b]">
      <ExplorerIcon className="h-[24px] w-[24px]" />
    </div>
    <div className="flex-1" />
    <svg viewBox="0 0 18 16" className="h-4 w-[18px]" fill="none" stroke="#f0f0f0">
      <path d="M1 5.5 H4 L8 2 V14 L4 10.5 H1 Z M11 5 C12 7 12 9 11 11 M13.5 3.5 C15 6 15 10 13.5 12.5 M16 2 C18 6 18 10 16 14" />
    </svg>
    <svg viewBox="0 0 18 18" className="ml-[10px] h-[17px] w-[17px]" fill="none" stroke="#f0f0f0">
      <path d="M3 15 C1 13 3 10 6 12 L14 3 C15 2 17 4 16 5 L9 13 L7 10" />
    </svg>
    <div className="ml-[11px] flex h-[13px] w-[23px] flex-col items-center justify-center gap-[2px] rounded-[1px] border border-[#f0f0f0]">
      <div className="h-px w-[17px] border-t border-dotted border-[#f0f0f0]" />
      <div className="h-px w-[17px] border-t border-dotted border-[#f0f0f0]" />
    </div>
    <div className="ml-[11px] flex w-[54px] flex-col items-center text-[11.4px] leading-[18px]">
      <span>3:55 PM</span>
      <span>9/27/2023</span>
    </div>
    <div className="relative ml-[18px] mr-[16px] h-[20px] w-[20px]">
      <svg viewBox="0 0 16 16" className="h-4 w-4">
        <path d="M0 1 H16 V12 H9 L6 15 V12 H0 Z" fill="#f4f4f4" />
        <path d="M3 4 H13 M3 6.5 H13 M3 9 H10" stroke="#555" strokeWidth="0.8" />
      </svg>
      <div className="absolute -right-[5px] bottom-[-5px] flex h-[15px] w-[15px] items-center justify-center rounded-full border border-[#777] bg-[#2e2e2e] text-[10px] font-bold leading-none">
        1
      </div>
    </div>
    <div className="mr-[4px] h-10 w-px bg-[#8a8a8a]" />
  </div>
);

// ---------- windows 11 taskbar ----------

const taskbarIcons: { art: ReactNode; dot?: boolean; active?: boolean }[] = [
  {
    art: (
      <svg viewBox="0 0 24 24" className="h-6 w-6">
        <rect x="1" y="9" width="14" height="14" fill="#707070" />
        <rect x="8" y="1" width="15" height="17" fill="#f4f4f4" />
        <rect x="8" y="9" width="7" height="9" fill="#bdbdbd" />
      </svg>
    ),
  },
  {
    art: (
      <svg viewBox="0 0 24 24" className="h-6 w-6">
        <path d="M12 1 C19 1 23 6 23 12 C23 18 19 23 12 23 C9 23 4 23 3 21 C1 18 1 15 1 12 C1 6 5 1 12 1 Z" fill="#6a5ec8" />
        <rect x="7" y="8" width="7" height="8" rx="1" fill="#fff" />
        <path d="M15 10 L18 8 V16 L15 14 Z" fill="#fff" />
      </svg>
    ),
  },
  {
    dot: true,
    art: (
      <svg viewBox="0 0 24 24" className="h-6 w-6">
        <path d="M0 2 H9 L11 4 H24 V23 H0 Z" fill="#f2b92e" />
        <path d="M0 7 H24 V23 H0 Z" fill="#fcd34d" />
        <path d="M6 23 V15 H18 V23 Z" fill="#1a7fc4" />
      </svg>
    ),
  },
  {
    dot: true,
    art: (
      <svg viewBox="0 0 24 24" className="h-6 w-6">
        <path d="M8 6 V3 C8 0 16 0 16 3 V6" fill="none" stroke="#3fa4d8" strokeWidth="2" />
        <rect x="2" y="6" width="20" height="17" rx="3" fill="#f6f6f6" />
        <rect x="7" y="10" width="4.5" height="4.5" fill="#e05a2b" />
        <rect x="12.5" y="10" width="4.5" height="4.5" fill="#6fb03a" />
        <rect x="7" y="15.5" width="4.5" height="4.5" fill="#2a8fd8" />
        <rect x="12.5" y="15.5" width="4.5" height="4.5" fill="#f2b92e" />
      </svg>
    ),
  },
  {
    dot: true,
    art: (
      <svg viewBox="0 0 24 24" className="h-6 w-6">
        <circle cx="12" cy="12" r="12" fill="#e0463a" />
        <path d="M12 24 A12 12 0 0 1 1.6 6 L7.5 15 L13 24 Z" fill="#3a9c4a" />
        <path d="M12 6.5 H23 A12 12 0 0 1 13 24 L17 14 Z" fill="#f6c32c" />
        <circle cx="12" cy="12" r="6" fill="#fff" />
        <circle cx="12" cy="12" r="4.5" fill="#4a88e8" />
      </svg>
    ),
  },
  {
    dot: true,
    art: (
      <svg viewBox="0 0 24 24" className="h-6 w-6">
        <rect width="24" height="24" fill="#3c3c3c" />
        <path d="M17 5 H8 L5 9 V18 L8 21 H18 V13 H12" fill="none" stroke="#9ad02e" strokeWidth="2.4" strokeDasharray="2.5 1.4" />
      </svg>
    ),
  },
  {
    dot: true,
    art: (
      <svg viewBox="0 0 24 24" className="h-6 w-6">
        <rect x="4" y="2" width="18" height="20" fill="#9b4fc8" />
        <rect x="1" y="6" width="12" height="12" fill="#6b2a9c" />
        <text x="3" y="16" fontSize="10" fontWeight="700" fill="#fff" fontFamily="Liberation Sans, sans-serif">N</text>
      </svg>
    ),
  },
  {
    dot: true,
    art: (
      <svg viewBox="0 0 24 24" className="h-6 w-6">
        <rect x="0" y="0" width="24" height="24" rx="11" fill="#1f6fe0" />
        <text x="5.5" y="18.5" fontSize="18" fontWeight="700" fill="#fff" fontFamily="Liberation Sans, sans-serif">Z</text>
      </svg>
    ),
  },
  {
    dot: true,
    art: (
      <svg viewBox="0 0 24 24" className="h-6 w-6">
        <rect x="1" y="1" width="22" height="22" fill="#eef5e4" stroke="#6fa83a" strokeWidth="2" />
        <path d="M5 18 L10 8 L14 13 L18 10 V18 Z" fill="none" stroke="#6fa83a" />
        <circle cx="15" cy="15" r="3" fill="#8aba3a" />
      </svg>
    ),
  },
  {
    dot: true,
    art: (
      <svg viewBox="0 0 24 24" className="h-6 w-6">
        <rect x="4" y="1" width="16" height="22" fill="#2ba4d8" />
        <path d="M4 1 H20 V4 H4 Z" fill="#1c6f98" />
        <path d="M7 8 H17 M7 12 H17 M7 16 H17" stroke="#e6f6fc" strokeWidth="1.6" />
        <rect x="4" y="21" width="16" height="2" fill="#b0683a" />
      </svg>
    ),
  },
  {
    active: true,
    art: <EdgeLogo className="h-6 w-6" />,
  },
  {
    dot: true,
    art: (
      <svg viewBox="0 0 24 24" className="h-6 w-6">
        <rect x="3" y="0" width="18" height="24" fill="#3f5560" />
        <rect x="5" y="2" width="14" height="5" fill="#8fb8c8" />
        <path d="M6 10 h3 v3 h-3 Z M10.5 10 h3 v3 h-3 Z M15 10 h3 v3 h-3 Z M6 15 h3 v3 h-3 Z M10.5 15 h3 v3 h-3 Z M15 15 h3 v7 h-3 Z M6 20 h3 v2 h-3 Z M10.5 20 h3 v2 h-3 Z" fill="#c8d4da" />
      </svg>
    ),
  },
  {
    dot: true,
    art: (
      <svg viewBox="0 0 24 24" className="h-6 w-6">
        <rect x="1" y="2" width="22" height="20" fill="#f0f4f8" />
        <rect x="7" y="4" width="11" height="16" fill="#1f7fd6" />
        <path d="M2 6 H5 M2 10 H5 M2 14 H5 M2 18 H5" stroke="#6d7a86" />
      </svg>
    ),
  },
];

const WindowsTaskbar = () => (
  <div className="flex h-12 shrink-0 items-center border-t border-[#3a4a58] bg-gradient-to-r from-[#212a35] via-[#0d2a5a] to-[#1c2d40] text-[12px] text-[#eef2f6]">
    <div className="flex w-[551px] shrink-0 items-center pl-[18px]">
      <svg viewBox="0 0 26 30" className="h-[30px] w-[25px]">
        <circle cx="13" cy="15" r="11" fill="#f0921e" />
        <ellipse cx="9" cy="7" rx="7" ry="4" fill="#b8cfe6" />
        <ellipse cx="18" cy="22" rx="7" ry="4" fill="#c8d8e8" />
      </svg>
      <div className="ml-[7px] flex flex-col leading-[16px]">
        <span>92°F</span>
        <span className="text-[#c6ccd4]">Partly sunny</span>
      </div>
    </div>
    <svg viewBox="0 0 24 24" className="h-6 w-6 shrink-0">
      <path d="M0 0 H11.4 V11.4 H0 Z M12.6 0 H24 V11.4 H12.6 Z M0 12.6 H11.4 V24 H0 Z M12.6 12.6 H24 V24 H12.6 Z" fill="#56c4f4" />
    </svg>
    <div className="ml-[12px] flex h-8 w-[221px] shrink-0 items-center rounded-full bg-[#2a3e5c] pl-[11px] pr-[20px]">
      <Search className="h-[17px] w-[17px] text-[#e8ecf0]" strokeWidth={1.5} />
      <span className="ml-[9px] flex-1 text-[13.5px] text-[#dfe4ea]">Search</span>
      <svg viewBox="0 0 22 20" className="h-[20px] w-[22px]">
        <rect x="1" y="4" width="20" height="15" rx="1.5" fill="#c8761a" />
        <rect x="1" y="4" width="20" height="6" fill="#a85a14" />
        <path d="M7 4 V2 H15 V4" fill="none" stroke="#5a3a14" strokeWidth="1.5" />
        <rect x="9.5" y="9" width="3" height="3" fill="#f4d04a" />
      </svg>
    </div>
    <div className="flex shrink-0">
      {taskbarIcons.map((item, i) => (
        <div
          key={i}
          className={`relative flex h-[44px] w-[44px] items-center justify-center rounded-md ${item.active ? "bg-[#1d3a63]" : ""}`}
        >
          {item.art}
          {item.dot && <div className="absolute bottom-[1px] left-[20px] h-[3px] w-[4px] rounded-full bg-[#9aa4b0]" />}
          {item.active && <div className="absolute bottom-[1px] left-[14px] h-[3px] w-4 rounded-full bg-[#5cc0f0]" />}
        </div>
      ))}
    </div>
    <div className="flex-1" />
    <ChevronUp className="h-[17px] w-[17px]" strokeWidth={2} />
    <svg viewBox="0 0 18 14" className="ml-[15px] h-[14px] w-[18px]">
      <path d="M4 13 C0 13 0 8 4 8 C4 3 11 2 12 7 C16 6 18 13 14 13 Z" fill="#8c97a3" />
      <path d="M3 1 L15 14" stroke="#1c2d40" strokeWidth="1.5" />
    </svg>
    <svg viewBox="0 0 18 18" className="ml-[14px] h-[17px] w-[17px]" fill="none" stroke="#eef2f6">
      <rect x="1" y="3" width="12" height="10" />
      <path d="M7 13 V16 M4 16.5 H10" />
      <rect x="13" y="1" width="4" height="4" fill="#eef2f6" />
      <path d="M15 5 V14 M12 16.5 H17" />
    </svg>
    <svg viewBox="0 0 18 16" className="ml-[8px] h-4 w-[17px]" fill="none" stroke="#eef2f6">
      <path d="M1 5.5 H4 L8 2 V14 L4 10.5 H1 Z M11 5 C12 7 12 9 11 11 M13.5 3.5 C15 6 15 10 13.5 12.5 M16 2 C18 6 18 10 16 14" />
    </svg>
    <svg viewBox="0 0 18 14" className="ml-[7px] h-[14px] w-[17px]">
      <rect x="1.5" y="3" width="13" height="9" rx="1" fill="none" stroke="#eef2f6" />
      <rect x="3" y="4.5" width="10" height="6" fill="#eef2f6" />
      <rect x="15" y="6" width="2" height="3" fill="#eef2f6" />
      <path d="M5 0 L2 4 H5 L3 7" stroke="#1c2d40" fill="none" />
    </svg>
    <div className="ml-[13px] mr-[16px] flex flex-col items-end leading-[16px]">
      <span>3:55 PM</span>
      <span>9/27/2023</span>
    </div>
  </div>
);

export default function App() {
  return (
    <div className="relative flex h-[1080px] w-[1920px] flex-col overflow-hidden bg-[#3b3b3b] font-['Noto_Sans','Open_Sans',sans-serif]">
      <TabBar />
      <Toolbar />
      <div className="flex min-h-0 flex-1">
        <div className="w-1 shrink-0" />
        <div className="flex min-w-0 flex-1 flex-col pt-[2px] pb-[10px]">
          <HcssHeader />
          <Desktop />
          <RemoteTaskbar />
        </div>
        <SideRail />
      </div>
      <WindowsTaskbar />
      <DownloadsFlyout />
    </div>
  );
}
